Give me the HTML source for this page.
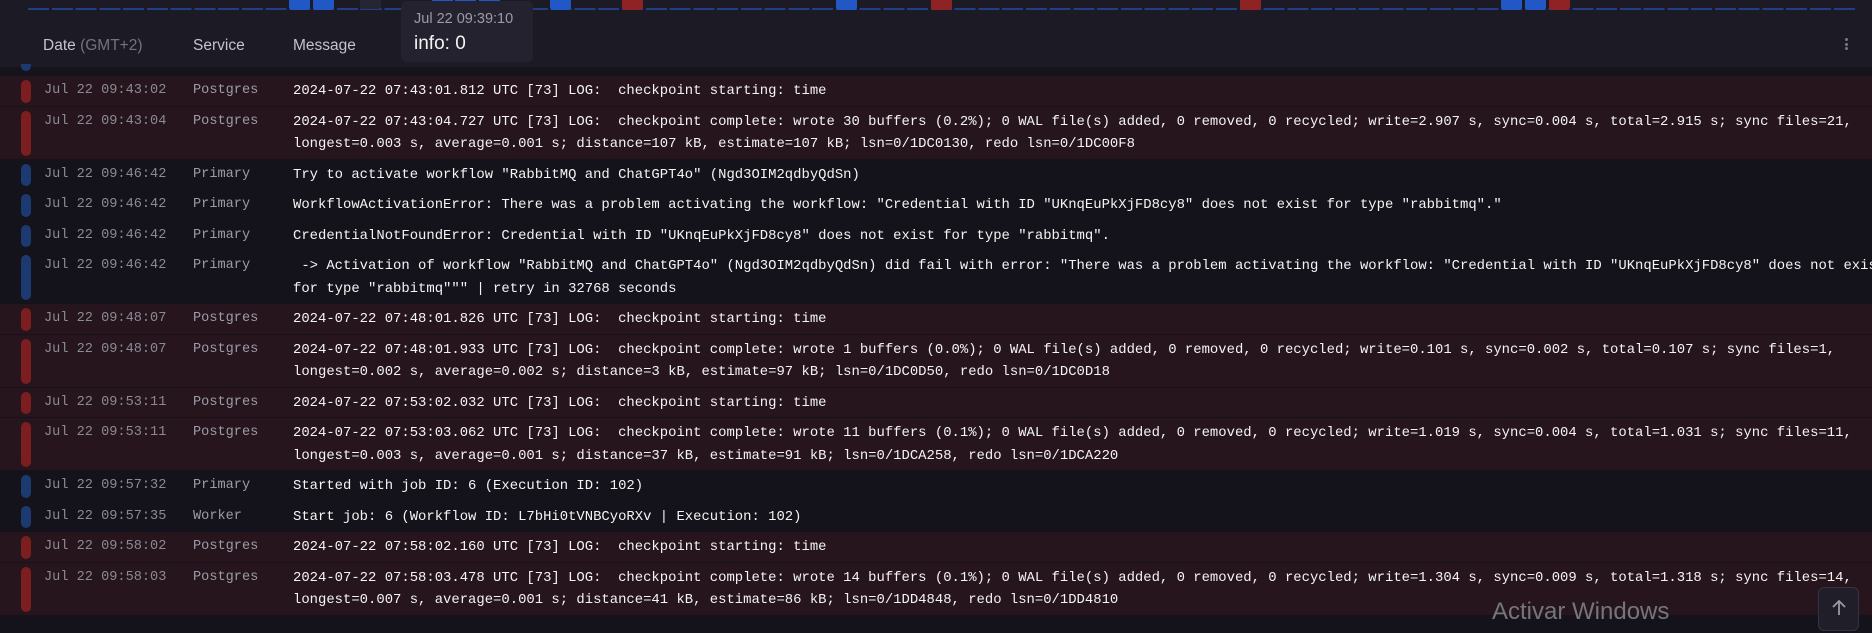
<!DOCTYPE html>
<html><head><meta charset="utf-8"><style>
*{margin:0;padding:0;box-sizing:border-box}
body{width:1872px;height:625px;overflow:hidden;background:#14131b;font-family:"Liberation Sans",sans-serif;position:relative}
.hdr{position:absolute;left:0;top:0;width:1872px;height:67px;background:#1b1a25}
.strip{position:absolute;left:0;top:67px;width:1872px;height:9px;background:#15141c}
.dash{position:absolute;left:27.66px;top:8px;width:1828px;height:2px;background:repeating-linear-gradient(90deg,#203f86 0 21px,transparent 21px 23.76px)}
.blk{position:absolute;top:0;width:21px;height:10px;border-radius:0 0 3px 3px}
.b{background:#2258c6}.r{background:#8e2224}.d{background:#262533;height:9px}
.h{position:absolute;top:37px;font-size:15.5px;color:#c4c4cc}
.tip{position:absolute;left:401px;top:1px;width:132px;height:61px;background:#23222e;border-radius:5px}
.tip .t1{position:absolute;left:13px;top:10px;font-size:14.5px;color:#9c9ca6}
.tip .t2{position:absolute;left:13px;top:32px;font-size:19px;color:#f4f4f4}
.logs{position:absolute;left:0;top:76px;width:1872px}
.row{position:relative;padding:4px 0;line-height:22.5px;font-family:"Liberation Mono",monospace;font-size:13.9px;height:30.5px;overflow:hidden;white-space:pre}
.row.two{height:53px}
.row.P{background:#26151c;box-shadow:inset 0 -1px 0 #1a1118}
.pill{position:absolute;left:21px;top:4px;bottom:4px;width:10px;border-radius:5px}
.P .pill{background:#7c1e1f}.B .pill{background:#1d3a70}
.dt{position:absolute;left:44px;color:#8a8a95;font-size:13.6px}
.sv{position:absolute;left:193px;color:#9c9ca8;font-size:13.6px}
.ms{position:absolute;left:293px;color:#f4f4f4}
.kb{position:absolute;left:1845px;top:38px;width:3px}
.kb i{display:block;width:3px;height:3px;background:#77778a;border-radius:50%;margin-bottom:1.5px}
.up{position:absolute;left:1818px;top:587px;width:41px;height:44px;background:#1f1e29;border:1px solid #34333f;border-radius:6px}
.wm{position:absolute;left:1492px;top:598px;font-size:24px;color:#75757c}
</style></head><body>
<div class="hdr"></div>
<div class="strip"></div>
<div style="position:absolute;left:21px;top:64px;width:10px;height:7px;background:#1d3a70;border-radius:0 0 5px 5px"></div>
<div class="dash"></div>
<div class="blk b" style="left:289px"></div>
<div class="blk b" style="left:313px"></div>
<div class="blk d" style="left:360px"></div>
<div class="blk b" style="left:432px"></div>
<div class="blk b" style="left:455px"></div>
<div class="blk b" style="left:479px"></div>
<div class="blk b" style="left:550px"></div>
<div class="blk r" style="left:622px"></div>
<div class="blk b" style="left:836px"></div>
<div class="blk r" style="left:931px"></div>
<div class="blk r" style="left:1240px"></div>
<div class="blk b" style="left:1501px"></div>
<div class="blk b" style="left:1525px"></div>
<div class="blk r" style="left:1549px"></div>
<div class="h" style="left:43px">Date <span style="color:#74747e">(GMT+2)</span></div>
<div class="h" style="left:193px">Service</div>
<div class="h" style="left:293px">Message</div>
<div class="kb"><i></i><i></i><i></i></div>
<div class="tip"><div class="t1">Jul 22 09:39:10</div><div class="t2">info: 0</div></div>
<div class="logs">
<div class="row P"><div class="pill"></div><span class="dt">Jul 22 09:43:02</span><span class="sv">Postgres</span><span class="ms">2024-07-22 07:43:01.812 UTC [73] LOG:  checkpoint starting: time</span></div>
<div class="row P two"><div class="pill"></div><span class="dt">Jul 22 09:43:04</span><span class="sv">Postgres</span><span class="ms">2024-07-22 07:43:04.727 UTC [73] LOG:  checkpoint complete: wrote 30 buffers (0.2%); 0 WAL file(s) added, 0 removed, 0 recycled; write=2.907 s, sync=0.004 s, total=2.915 s; sync files=21,
longest=0.003 s, average=0.001 s; distance=107 kB, estimate=107 kB; lsn=0/1DC0130, redo lsn=0/1DC00F8</span></div>
<div class="row B"><div class="pill"></div><span class="dt">Jul 22 09:46:42</span><span class="sv">Primary</span><span class="ms">Try to activate workflow "RabbitMQ and ChatGPT4o" (Ngd3OIM2qdbyQdSn)</span></div>
<div class="row B"><div class="pill"></div><span class="dt">Jul 22 09:46:42</span><span class="sv">Primary</span><span class="ms">WorkflowActivationError: There was a problem activating the workflow: "Credential with ID "UKnqEuPkXjFD8cy8" does not exist for type "rabbitmq"."</span></div>
<div class="row B"><div class="pill"></div><span class="dt">Jul 22 09:46:42</span><span class="sv">Primary</span><span class="ms">CredentialNotFoundError: Credential with ID "UKnqEuPkXjFD8cy8" does not exist for type "rabbitmq".</span></div>
<div class="row B two"><div class="pill"></div><span class="dt">Jul 22 09:46:42</span><span class="sv">Primary</span><span class="ms"> -&gt; Activation of workflow "RabbitMQ and ChatGPT4o" (Ngd3OIM2qdbyQdSn) did fail with error: "There was a problem activating the workflow: "Credential with ID "UKnqEuPkXjFD8cy8" does not exist
for type "rabbitmq""" | retry in 32768 seconds</span></div>
<div class="row P"><div class="pill"></div><span class="dt">Jul 22 09:48:07</span><span class="sv">Postgres</span><span class="ms">2024-07-22 07:48:01.826 UTC [73] LOG:  checkpoint starting: time</span></div>
<div class="row P two"><div class="pill"></div><span class="dt">Jul 22 09:48:07</span><span class="sv">Postgres</span><span class="ms">2024-07-22 07:48:01.933 UTC [73] LOG:  checkpoint complete: wrote 1 buffers (0.0%); 0 WAL file(s) added, 0 removed, 0 recycled; write=0.101 s, sync=0.002 s, total=0.107 s; sync files=1,
longest=0.002 s, average=0.002 s; distance=3 kB, estimate=97 kB; lsn=0/1DC0D50, redo lsn=0/1DC0D18</span></div>
<div class="row P"><div class="pill"></div><span class="dt">Jul 22 09:53:11</span><span class="sv">Postgres</span><span class="ms">2024-07-22 07:53:02.032 UTC [73] LOG:  checkpoint starting: time</span></div>
<div class="row P two"><div class="pill"></div><span class="dt">Jul 22 09:53:11</span><span class="sv">Postgres</span><span class="ms">2024-07-22 07:53:03.062 UTC [73] LOG:  checkpoint complete: wrote 11 buffers (0.1%); 0 WAL file(s) added, 0 removed, 0 recycled; write=1.019 s, sync=0.004 s, total=1.031 s; sync files=11,
longest=0.003 s, average=0.001 s; distance=37 kB, estimate=91 kB; lsn=0/1DCA258, redo lsn=0/1DCA220</span></div>
<div class="row B"><div class="pill"></div><span class="dt">Jul 22 09:57:32</span><span class="sv">Primary</span><span class="ms">Started with job ID: 6 (Execution ID: 102)</span></div>
<div class="row B"><div class="pill"></div><span class="dt">Jul 22 09:57:35</span><span class="sv">Worker</span><span class="ms">Start job: 6 (Workflow ID: L7bHi0tVNBCyoRXv | Execution: 102)</span></div>
<div class="row P"><div class="pill"></div><span class="dt">Jul 22 09:58:02</span><span class="sv">Postgres</span><span class="ms">2024-07-22 07:58:02.160 UTC [73] LOG:  checkpoint starting: time</span></div>
<div class="row P two"><div class="pill"></div><span class="dt">Jul 22 09:58:03</span><span class="sv">Postgres</span><span class="ms">2024-07-22 07:58:03.478 UTC [73] LOG:  checkpoint complete: wrote 14 buffers (0.1%); 0 WAL file(s) added, 0 removed, 0 recycled; write=1.304 s, sync=0.009 s, total=1.318 s; sync files=14,
longest=0.007 s, average=0.001 s; distance=41 kB, estimate=86 kB; lsn=0/1DD4848, redo lsn=0/1DD4810</span></div>
</div>
<div class="wm">Activar Windows</div>
<div class="up"><svg width="41" height="40" viewBox="0 0 41 40"><path d="M20 27V13M14 19l6-6 6 6" stroke="#9a9aa6" stroke-width="1.8" fill="none"/></svg></div>
</body></html>
